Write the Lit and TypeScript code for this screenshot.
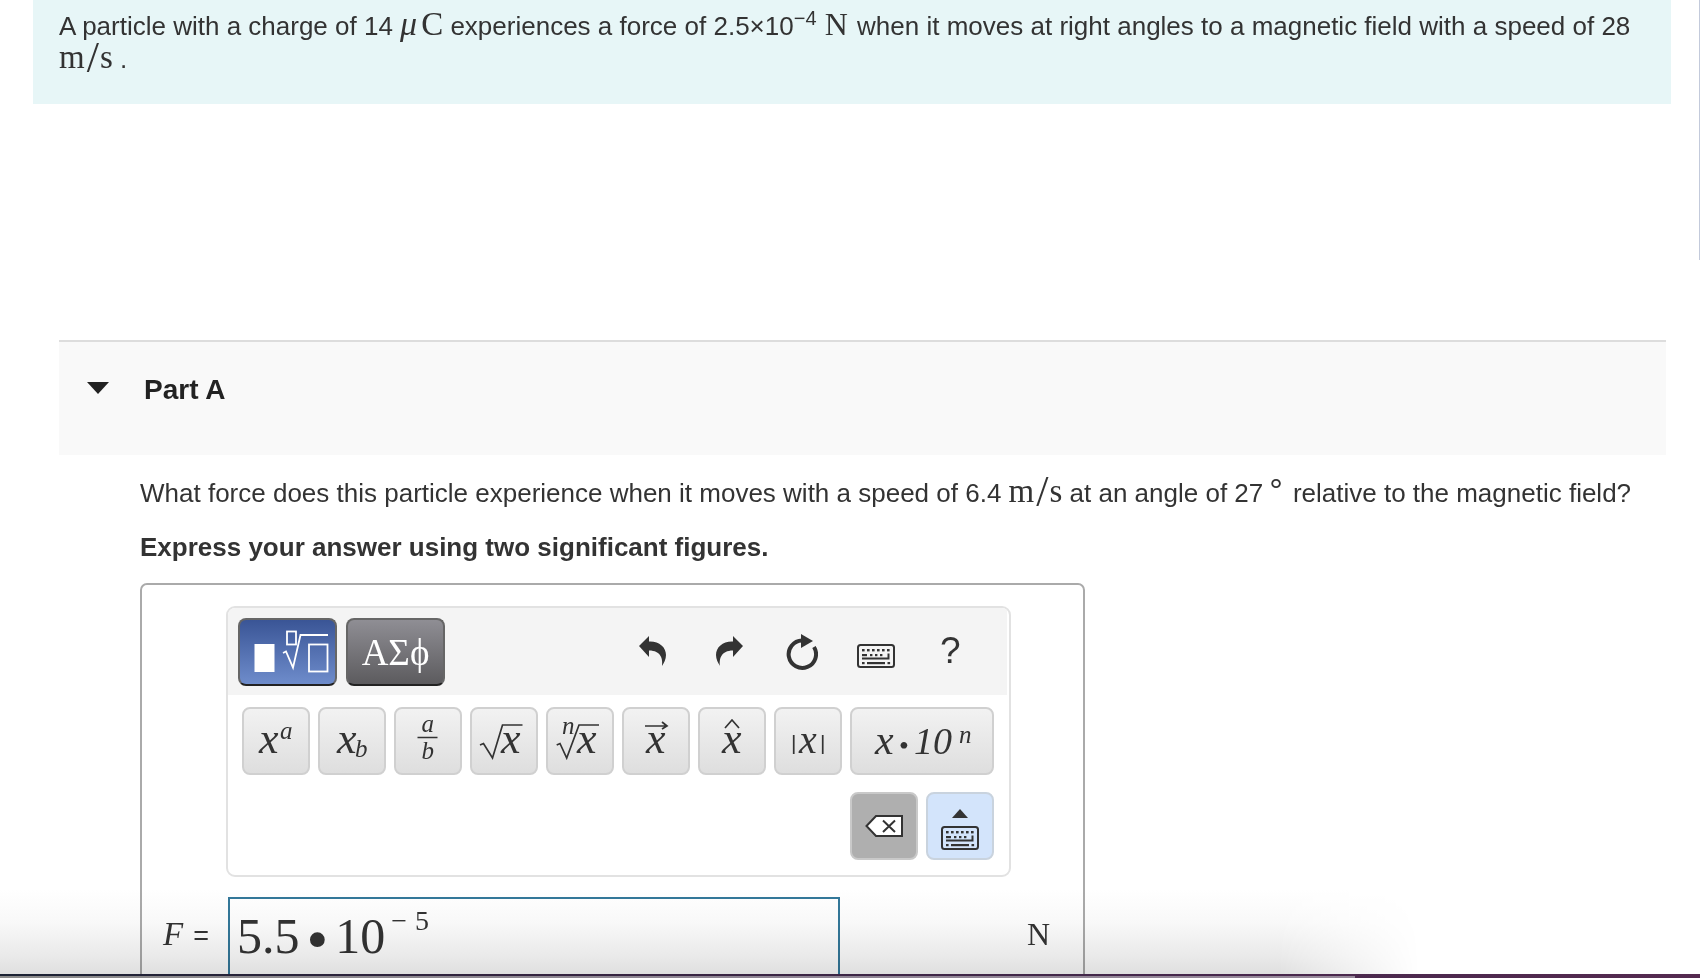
import { LitElement, html, css, svg } from "lit";
import { customElement } from "lit/decorators.js";

const keyboard = () => html`<svg class="kb" width="38" height="24" viewBox="0 0 38 24">
  <rect x="1" y="1" width="36" height="22" rx="2.5" fill="none" stroke="#333" stroke-width="2"/>
  ${[5, 10, 15, 20, 25, 30].map((x) => svg`<rect x=${x} y="5" width="2.6" height="2.4" fill="#333"/>`)}
  <rect x="5" y="10" width="5" height="2.2" fill="#333"/>
  ${[13, 18, 23].map((x) => svg`<rect x=${x} y="10" width="2.4" height="2.2" fill="#333"/>`)}
  <path d="M31.5 9.5 V14.5 H5" fill="none" stroke="#333" stroke-width="2"/>
  <rect x="5" y="18" width="2.6" height="2.2" fill="#333"/>
  <rect x="10" y="18" width="18" height="2.2" fill="#333"/>
  <rect x="30.5" y="18" width="2.6" height="2.2" fill="#333"/>
</svg>`;

const glyph = (content: unknown) =>
  svg`<svg class="glyph" width="64" height="64" viewBox="0 0 64 64">${content}</svg>`;

@customElement("app-root")
export class AppRoot extends LitElement {
  static styles = css`
    :host {
      display: block;
      position: relative;
      width: 1700px;
      height: 978px;
      overflow: hidden;
      background: #fff;
      color: #333;
      font-family: "Liberation Sans", Arial, sans-serif;
      font-size: 26px;
    }
    .m { font-family: "Liberation Serif", "Times New Roman", serif; }
    .i { font-style: italic; }
    .banner {
      margin-left: 33px;
      width: 1638px;
      height: 104px;
      box-sizing: border-box;
      background: #e7f6f7;
      padding: 10px 26px 0;
      line-height: 33px;
    }
    .mu { font-size: 34px; line-height: 0; margin-right: 4px; }
    .unit { font-size: 32px; line-height: 0; margin-left: 1px; }
    .unit-c { font-size: 33px; line-height: 0; }
    .after-n { margin-left: 2px; }
    .mps { font-family: "Liberation Serif", serif; font-size: 33px; line-height: 0; }
    .mps .sl {
      font-size: 44px;
      font-weight: normal;
      margin: 0 1px 0 2px;
      line-height: 0;
      vertical-align: -4px;
    }
    sup.e { font-size: 20px; line-height: 0; vertical-align: 10px; }
    .gap { height: 236px; }
    .part {
      margin-left: 59px;
      width: 1607px;
      height: 115px;
      box-sizing: border-box;
      border-top: 2px solid #ddd;
      background: #f9f9f9;
      display: flex;
      padding: 32px 0 0 28px;
    }
    .tri {
      width: 0;
      height: 0;
      margin-top: 8px;
      border-left: 11px solid transparent;
      border-right: 11px solid transparent;
      border-top: 12px solid #222;
    }
    .part-title {
      margin-left: 35px;
      font-size: 28px;
      font-weight: bold;
      color: #222;
      line-height: 32px;
    }
    .body { padding: 20px 0 0 140px; }
    .q { line-height: 36px; white-space: nowrap; }
    .deg { font-size: 34px; vertical-align: 0; line-height: 0; margin: 0 10px 0 6px; }
    .hint { margin-top: 19px; font-weight: bold; line-height: 34px; }
    .box {
      margin-top: 19px;
      width: 945px;
      height: 420px;
      box-sizing: border-box;
      border: 2px solid #aaa;
      border-radius: 7px;
      padding: 21px 0 0 84px;
    }
    .editor {
      width: 785px;
      height: 271px;
      box-sizing: border-box;
      border: 2px solid #e2e2e2;
      border-radius: 9px;
      overflow: hidden;
    }
    .top {
      height: 87px;
      box-sizing: border-box;
      background: #f4f4f4;
      display: flex;
      align-items: flex-start;
      padding: 10px 0 0 10px;
      margin-right: 2px;
    }
    .tab {
      flex: none;
      width: 99px;
      height: 68px;
      box-sizing: border-box;
      border-radius: 8px;
      border: 2px solid #666;
      border-bottom-color: #222;
      margin-right: 9px;
      display: flex;
      align-items: center;
      justify-content: center;
    }
    .tab.blue { background: linear-gradient(#3a5596, #6e8ccb); }
    .tab.gray {
      background: linear-gradient(#8f8e94, #5c5b5e);
      color: #fff;
      font-family: "Liberation Serif", serif;
      font-size: 37px;
    }
    .tools { display: flex; align-items: flex-start; flex: 1; }
    .undo { margin: 17px 0 0 185px; }
    .redo { margin: 17px 0 0 50px; }
    .refresh { margin: 16px 0 0 43px; }
    .tool-kb { margin: 26px 0 0 39px; display: flex; }
    .help { margin: 14px 0 0 45px; font-size: 37px; line-height: 37px; color: #333; }
    .keys { padding: 12px 0 0 14px; }
    .row { display: flex; gap: 8px; }
    .row2 { display: flex; justify-content: flex-end; gap: 8px; margin-top: 17px; padding-right: 15px; }
    .k {
      flex: none;
      width: 68px;
      height: 68px;
      box-sizing: border-box;
      border: 2px solid #d0d0d0;
      border-radius: 8px;
      background: linear-gradient(#f2f2f2, #dedede);
      display: flex;
      align-items: center;
      justify-content: center;
    }
    .k.wide { width: 144px; }
    .glyph { display: block; flex: none; }
    .glyph text {
      font-family: "Liberation Serif", serif;
      font-style: italic;
      fill: #333;
    }
    .glyph .x { font-size: 44px; }
    .glyph .s { font-size: 25px; }
    .glyph .bar { font-family: "Liberation Sans", sans-serif; font-style: normal; font-size: 21px; }
    .glyph .abs { font-size: 40px; }
    .glyph .wx { font-size: 42px; }
    .glyph .wdot { font-size: 28px; font-style: normal; }
    .glyph .wten { font-size: 38px; }
    .glyph .wn { font-size: 25px; }
    .glyph .line { fill: none; stroke: #333; stroke-width: 1.7; }
    .bs { background: #afafaf; border-color: #c9c9c9; }
    .up {
      background: #d3e4fb;
      border-color: #c9d3de;
      flex-direction: column;
      gap: 8px;
      padding-top: 6px;
    }
    .answer {
      display: flex;
      align-items: flex-start;
      margin: 20px 0 0 -63px;
      height: 100px;
    }
    .lhs {
      flex: none;
      width: 65px;
      margin-top: 17px;
      line-height: 40px;
      white-space: nowrap;
      color: #333;
    }
    .lhs .f { font-family: "Liberation Serif", serif; font-style: italic; font-size: 33px; }
    .lhs .eq { font-size: 27px; margin-left: 10px; }
    .input {
      flex: none;
      width: 612px;
      height: 100px;
      box-sizing: border-box;
      border: 2px solid #33789a;
      font-family: "Liberation Serif", serif;
      font-size: 50px;
      line-height: 60px;
      padding: 7px 0 0 7px;
      color: #333;
      white-space: nowrap;
    }
    .input .dot { font-size: 62px; line-height: 0; vertical-align: -7px; margin: 0 7px; }
    .input sup { font-size: 28px; line-height: 0; vertical-align: 23px; margin-left: 6px; }
    .input sup span { margin-right: 8px; }
    .n {
      font-family: "Liberation Serif", serif;
      font-size: 32px;
      line-height: 40px;
      margin: 17px 0 0 187px;
    }
    .vline { position: absolute; right: 0; top: 0; width: 1px; height: 260px; background: #c3cadb; }
    .fade {
      position: absolute;
      left: 0;
      bottom: 4px;
      width: 1420px;
      height: 84px;
      background: linear-gradient(#fff, #f8f8f8 40%, #e9e9e9 80%, #dfdfdf);
      -webkit-mask-image: linear-gradient(90deg, #000 90%, transparent);
      mask-image: linear-gradient(90deg, #000 90%, transparent);
      mix-blend-mode: multiply;
      pointer-events: none;
    }
    .dock {
      position: absolute;
      left: 0;
      right: 0;
      bottom: 0;
      height: 4px;
      background: linear-gradient(90deg, #1b2233, #33243f 30%, #46284c 70%, #552a50);
    }
    .dock-light {
      position: absolute;
      left: 0;
      bottom: 0;
      width: 1355px;
      height: 2px;
      background: linear-gradient(90deg, #8a8a8a, #8f8494 60%, #97889a);
    }
  `;

  render() {
    const mps = html`<span class="mps">m<span class="sl">/</span>s</span>`;
    return html`
      <div class="banner">
        A particle with a charge of 14 <span class="m i mu">μ</span><span class="m unit-c">C</span> experiences a force of 2.5×10<sup class="e">−4</sup> <span class="m unit">N</span> <span class="after-n">when</span> it moves at right angles to a magnetic field with a speed of 28
        ${mps} .
      </div>
      <div class="gap"></div>
      <div class="part">
        <div class="tri"></div>
        <div class="part-title">Part A</div>
      </div>
      <div class="body">
        <div class="q">What force does this particle experience when it moves with a speed of 6.4 ${mps} at an angle of 27<span class="deg">°</span>relative to the magnetic field?</div>
        <div class="hint">Express your answer using two significant figures.</div>
        <div class="box">
          <div class="editor">
            <div class="top">
              <div class="tab blue">
                <svg width="84" height="48" viewBox="0 0 84 48">
                  <rect x="8.5" y="16" width="20" height="28" fill="#fff"/>
                  <rect x="41" y="3.5" width="9" height="13" fill="none" stroke="#fff" stroke-width="1.8"/>
                  <path d="M37 25 L40 23.5 L47 39.7 L54.5 7 H82" fill="none" stroke="#fff" stroke-width="1.8"/>
                  <rect x="63" y="16.5" width="18.5" height="27" fill="none" stroke="#fff" stroke-width="1.8"/>
                </svg>
              </div>
              <div class="tab gray">ΑΣϕ</div>
              <div class="tools">
                <svg class="undo" width="27" height="31" viewBox="0 0 27 31">
                  <path d="M0 11 L10 1 V6.5 C20 6 27 12 27 20 C27 24 25 28 23 31 C24 24 22 15.5 10 15.5 V22 Z" fill="#333"/>
                </svg>
                <svg class="redo" width="27" height="31" viewBox="0 0 27 31">
                  <path d="M27 11 L17 1 V6.5 C7 6 0 12 0 20 C0 24 2 28 4 31 C3 24 5 15.5 17 15.5 V22 Z" fill="#333"/>
                </svg>
                <svg class="refresh" width="32" height="36" viewBox="0 0 32 36">
                  <path d="M16 6.5 A13.7 13.7 0 1 0 28 13" fill="none" stroke="#333" stroke-width="4"/>
                  <path d="M15 0 L27 7 L15 14 Z" fill="#333"/>
                </svg>
                <div class="tool-kb">${keyboard()}</div>
                <div class="help">?</div>
              </div>
            </div>
            <div class="keys">
              <div class="row">
                <div class="k">${glyph(svg`<text class="x" x="15" y="44">x</text><text class="s" x="36" y="30">a</text>`)}</div>
                <div class="k">${glyph(svg`<text class="x" x="17" y="44">x</text><text class="s" x="35" y="48">b</text>`)}</div>
                <div class="k">${glyph(svg`<text class="s" x="25.5" y="23">a</text><path class="line" d="M21.5 28.5 H41.5"/><text class="s" x="25.5" y="50">b</text>`)}</div>
                <div class="k">${glyph(svg`<path class="line" d="M8 36 L11.5 34.5 L20.5 49 L30.5 16 H50.5"/><text class="x" x="29" y="44">x</text>`)}</div>
                <div class="k">${glyph(svg`<path class="line" d="M8.7 36 L12 34.5 L18.7 49 L31 16 H51"/><text class="s" x="14" y="25">n</text><text class="x" x="29" y="44">x</text>`)}</div>
                <div class="k">${glyph(svg`<path class="line" d="M21 17 H43 M38 13 L43 17 L38 20"/><text class="x" x="22" y="44">x</text>`)}</div>
                <div class="k">${glyph(svg`<path class="line" d="M25 19 L32 11 L39 19"/><text class="x" x="22" y="44">x</text>`)}</div>
                <div class="k">${glyph(svg`<text class="bar" x="15" y="41">|</text><text class="x abs" x="23" y="43.5">x</text><text class="bar" x="44" y="41">|</text>`)}</div>
                <div class="k wide">
                  <svg class="glyph" width="140" height="64" viewBox="0 0 140 64">
                    <text class="wx" x="23" y="45">x</text>
                    <text class="wdot" x="47" y="46">•</text>
                    <text class="wten" x="62" y="45">10</text>
                    <text class="wn" x="107" y="34">n</text>
                  </svg>
                </div>
              </div>
              <div class="row2">
                <div class="k bs">
                  <svg width="38" height="22" viewBox="0 0 38 22">
                    <path d="M1.5 11 L11 1 H37 V21 H11 Z" fill="#fff" stroke="#333" stroke-width="2"/>
                    <path d="M18 5.5 L30 17 M30 5.5 L18 17" stroke="#333" stroke-width="2" fill="none"/>
                  </svg>
                </div>
                <div class="k up">
                  <svg width="16" height="9" viewBox="0 0 16 9"><path d="M0 9 L8 0 L16 9 Z" fill="#333"/></svg>
                  ${keyboard()}
                </div>
              </div>
            </div>
          </div>
          <div class="answer">
            <div class="lhs"><span class="f">F</span><span class="eq">=</span></div>
            <div class="input">5.5<span class="dot">•</span>10<sup><span>−</span>5</sup></div>
            <div class="n">N</div>
          </div>
        </div>
      </div>
      <div class="vline"></div>
      <div class="fade"></div>
      <div class="dock"></div>
      <div class="dock-light"></div>
    `;
  }
}
